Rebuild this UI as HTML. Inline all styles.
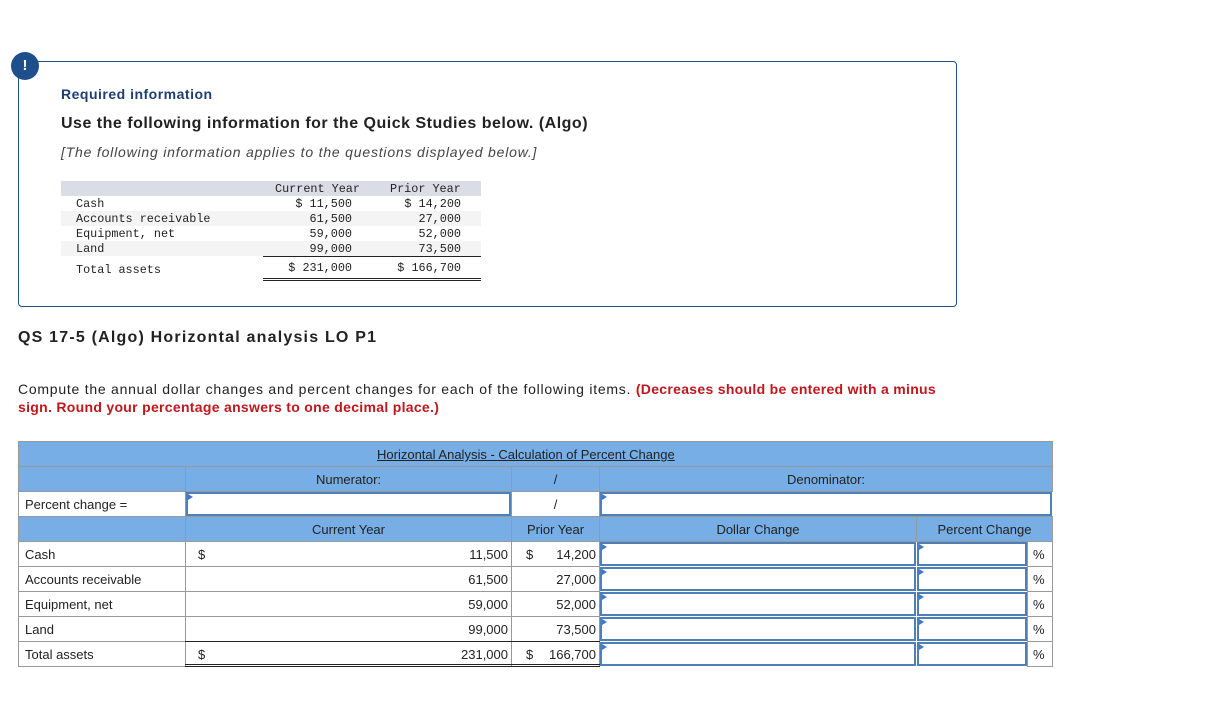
<!DOCTYPE html>
<html><head><style>
body{margin:0;width:1231px;height:708px;background:#fff;font-family:"Liberation Sans",Arial,sans-serif;position:relative;overflow:hidden;color:#222}
.a{position:absolute}
.m{font-family:"Liberation Mono",monospace;font-size:11.8px;color:#222}
.t{font-size:13px;color:#222;white-space:nowrap}
.cell{position:absolute;box-sizing:border-box;border:1px solid #999}
.bl{background:#77aee5}
.inp{position:absolute;box-sizing:border-box;border:2px solid #4f7fb8;background:#fff}
.inp:before{content:"";position:absolute;left:0;top:0;border-left:5px solid #3a7ad0;border-top:3px solid transparent;border-bottom:3px solid transparent}
</style></head><body>
<div class="a" style="left:18px;top:61px;width:939px;height:246px;box-sizing:border-box;border:1px solid #1f4e8c;border-radius:4px"></div>
<div class="a" style="left:11px;top:52px;width:28px;height:28px;border-radius:50%;background:#1f4e8c;color:#fff;font-weight:bold;font-size:15px;text-align:center;line-height:28px">!</div>
<div class="a" style="left:61px;top:86px;font-size:14px;font-weight:bold;color:#1f3f74;letter-spacing:0.5px">Required information</div>
<div class="a" style="left:61px;top:115px;font-size:16px;font-weight:bold;color:#222;letter-spacing:0.5px">Use the following information for the Quick Studies below. (Algo)</div>
<div class="a" style="left:61px;top:144px;font-size:14px;font-style:italic;color:#444;letter-spacing:0.8px">[The following information applies to the questions displayed below.]</div>
<div class="a" style="left:61px;top:181px;width:420px;height:15px;background:#dadde6"></div>
<div class="a" style="left:61px;top:211px;width:420px;height:15px;background:#f4f4f4"></div>
<div class="a" style="left:61px;top:241px;width:420px;height:15px;background:#f4f4f4"></div>
<div class="a m" style="left:275px;top:182px">Current Year</div>
<div class="a m" style="left:390px;top:182px">Prior Year</div>
<div class="a m" style="left:76px;top:197px;line-height:15px">Cash<br>Accounts receivable<br>Equipment, net<br>Land</div>
<div class="a m" style="left:76px;top:263px">Total assets</div>
<div class="a m" style="left:250px;width:102px;text-align:right;top:197px;line-height:15px">$ 11,500<br>61,500<br>59,000<br>99,000</div>
<div class="a m" style="left:360px;width:101px;text-align:right;top:197px;line-height:15px">$ 14,200<br>27,000<br>52,000<br>73,500</div>
<div class="a m" style="left:250px;width:102px;text-align:right;top:261px">$ 231,000</div>
<div class="a m" style="left:360px;width:101px;text-align:right;top:261px">$ 166,700</div>
<div class="a" style="left:263px;top:256px;width:218px;border-top:1px solid #222"></div>
<div class="a" style="left:263px;top:278px;width:218px;height:1px;border-top:1px solid #222;border-bottom:1px solid #222"></div>

<div class="a" style="left:18px;top:329px;font-size:16px;font-weight:bold;letter-spacing:1.2px">QS 17-5 (Algo) Horizontal analysis LO P1</div>
<div class="a" style="left:18px;top:380px;font-size:14px;line-height:18px;width:945px;letter-spacing:0.75px">Compute the annual dollar changes and percent changes for each of the following items. <b style="color:#c0161c;letter-spacing:0.3px">(Decreases should be entered with a minus sign. Round your percentage answers to one decimal place.)</b></div>

<div class="cell bl" style="left:18px;top:441px;width:1035px;height:26px"></div>
<div class="a t" style="left:377px;top:447px;text-decoration:underline">Horizontal Analysis - Calculation of Percent Change</div>
<div class="cell bl" style="left:18px;top:466px;width:168px;height:26px"></div>
<div class="cell bl" style="left:185px;top:466px;width:327px;height:26px"></div>
<div class="cell bl" style="left:511px;top:466px;width:89px;height:26px"></div>
<div class="cell bl" style="left:599px;top:466px;width:454px;height:26px"></div>
<div class="a t" style="left:185px;width:327px;text-align:center;top:472px">Numerator:</div>
<div class="a t" style="left:511px;width:89px;text-align:center;top:472px">/</div>
<div class="a t" style="left:599px;width:454px;text-align:center;top:472px">Denominator:</div>
<div class="cell" style="left:18px;top:491px;width:168px;height:26px"></div>
<div class="a t" style="left:25px;top:497px">Percent change =</div>
<div class="inp" style="left:186px;top:492px;width:325px;height:24px"></div>
<div class="cell" style="left:511px;top:491px;width:89px;height:26px"></div>
<div class="a t" style="left:511px;width:89px;text-align:center;top:497px">/</div>
<div class="inp" style="left:600px;top:492px;width:452px;height:24px"></div>
<div class="cell bl" style="left:18px;top:516px;width:168px;height:26px"></div>
<div class="cell bl" style="left:185px;top:516px;width:327px;height:26px"></div>
<div class="cell bl" style="left:511px;top:516px;width:89px;height:26px"></div>
<div class="cell bl" style="left:599px;top:516px;width:318px;height:26px"></div>
<div class="cell bl" style="left:916px;top:516px;width:137px;height:26px"></div>
<div class="a t" style="left:185px;width:327px;text-align:center;top:522px">Current Year</div>
<div class="a t" style="left:511px;width:89px;text-align:center;top:522px">Prior Year</div>
<div class="a t" style="left:599px;width:318px;text-align:center;top:522px">Dollar Change</div>
<div class="a t" style="left:916px;width:137px;text-align:center;top:522px">Percent Change</div>

<div id="rows"></div>
<script>
var d=[["Cash","$","11,500","$","14,200"],["Accounts receivable","","61,500","","27,000"],["Equipment, net","","59,000","","52,000"],["Land","","99,000","","73,500"],["Total assets","$","231,000","$","166,700"]];
var h="";
d.forEach(function(r,i){var y=541+i*25;
h+='<div class="cell" style="left:18px;top:'+y+'px;width:168px;height:26px"></div>';
h+='<div class="cell" style="left:185px;top:'+y+'px;width:327px;height:26px"></div>';
h+='<div class="cell" style="left:511px;top:'+y+'px;width:89px;height:26px"></div>';
h+='<div class="cell" style="left:1027px;top:'+y+'px;width:26px;height:26px"></div>';
h+='<div class="a t" style="left:25px;top:'+(y+6)+'px">'+r[0]+'</div>';
h+='<div class="a t" style="left:198px;top:'+(y+6)+'px">'+r[1]+'</div>';
h+='<div class="a t" style="left:400px;width:108px;text-align:right;top:'+(y+6)+'px">'+r[2]+'</div>';
h+='<div class="a t" style="left:526px;top:'+(y+6)+'px">'+r[3]+'</div>';
h+='<div class="a t" style="left:540px;width:56px;text-align:right;top:'+(y+6)+'px">'+r[4]+'</div>';
h+='<div class="inp" style="left:600px;top:'+(y+1)+'px;width:316px;height:24px"></div>';
h+='<div class="inp" style="left:917px;top:'+(y+1)+'px;width:110px;height:24px"></div>';
h+='<div class="a t" style="left:1033px;top:'+(y+6)+'px">%</div>';
});
h+='<div class="a" style="left:185px;top:641px;width:415px;border-top:1px solid #222"></div>';
h+='<div class="a" style="left:185px;top:664px;width:415px;height:1px;border-top:1px solid #222;border-bottom:1px solid #222"></div>';
document.getElementById("rows").innerHTML=h;
</script>
</body></html>
